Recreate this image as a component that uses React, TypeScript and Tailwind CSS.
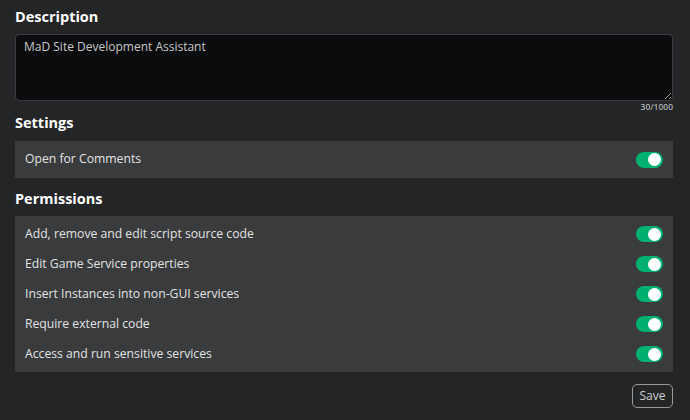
const permissions = [
  "Add, remove and edit script source code",
  "Edit Game Service properties",
  "Insert Instances into non-GUI services",
  "Require external code",
  "Access and run sensitive services",
];

function Toggle() {
  return (
    <div className="flex h-[16px] w-[27px] items-center justify-end rounded-full bg-[#00b06f] pr-[2px]">
      <div className="h-[13px] w-[13px] rounded-full bg-white" />
    </div>
  );
}

function Row({ label }: { label: string }) {
  return (
    <div className="flex h-[30px] items-center justify-between px-[10px]">
      <span className="text-[12.2px] text-[#e3e3e3]">{label}</span>
      <Toggle />
    </div>
  );
}

export default function App() {
  return (
    <div
      className="min-h-[420px] w-full bg-[#232527] pl-[15px] pr-[17px] pt-[7px] text-white"
      style={{ fontFamily: '"Open Sans", "Liberation Sans", sans-serif' }}
    >
      <h2 className="text-[14.5px] font-bold leading-[20px]">Description</h2>
      <textarea
        defaultValue="MaD Site Development Assistant"
        className="mt-[7px] block h-[67px] w-full resize-y rounded-[4px] border border-[#3a3c3f] bg-[#0b0c0e] px-[8px] py-[3px] text-[12px] text-[#c8c8c8] outline-none"
      />
      <div className="mt-[1px] text-right text-[8.5px] font-semibold leading-[10px] text-[#b0b0b0]">30/1000</div>

      <h2 className="mt-[1px] text-[14.5px] font-bold leading-[20px]">Settings</h2>
      <div className="mt-[8px] flex h-[37px] items-center justify-between bg-[#393b3d] px-[10px]">
        <span className="text-[12.2px] text-[#e3e3e3]">Open for Comments</span>
        <Toggle />
      </div>

      <h2 className="mt-[11px] text-[14.5px] font-bold leading-[20px]">Permissions</h2>
      <div className="mt-[7px] flex flex-col bg-[#393b3d] pb-[3px] pt-[3px]">
        {permissions.map((p) => (
          <Row key={p} label={p} />
        ))}
      </div>

      <div className="mt-[12px] flex justify-end">
        <button className="h-[24px] w-[41px] rounded-[5px] border border-[#9a9a9a] text-[12px] text-[#d0d0d0]">
          Save
        </button>
      </div>
    </div>
  );
}
